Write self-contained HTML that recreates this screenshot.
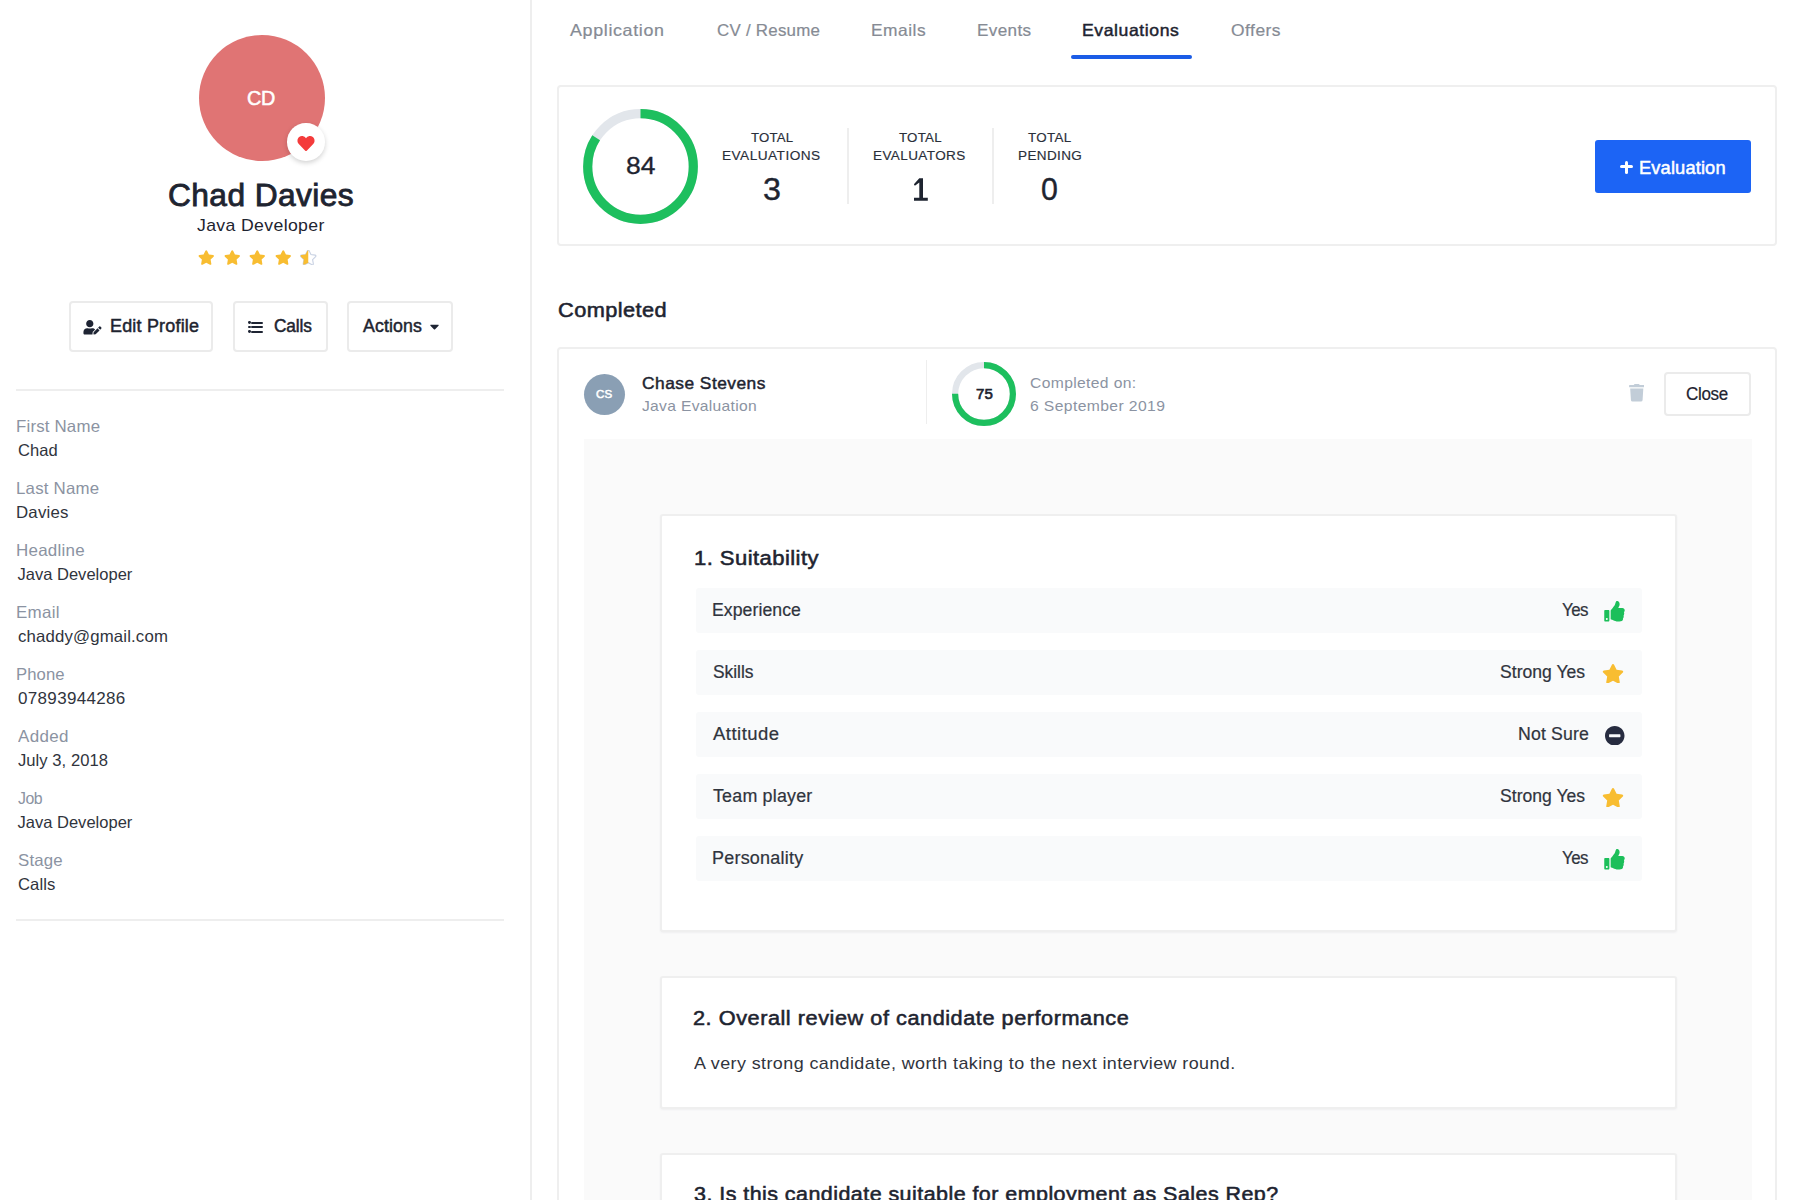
<!DOCTYPE html>
<html><head><meta charset="utf-8"><style>
html,body{margin:0;padding:0;background:#fff;width:1800px;height:1200px;overflow:hidden;position:relative}
.b{position:absolute}
.t{position:absolute;white-space:pre;font-family:"Liberation Sans",sans-serif}
</style></head><body>
<div class="b" style="left:530px;top:0px;width:2px;height:1200px;background:#eeeeee"></div>
<div class="b" style="left:198.5px;top:35px;width:126px;height:126px;border-radius:50%;background:#e07474"></div>
<div class="b" style="left:287px;top:123px;width:37.5px;height:37.5px;border-radius:50%;background:#fff;box-shadow:0 2px 5px rgba(0,0,0,.18)"></div>
<svg class="b" style="left:296.5px;top:134.5px" width="18" height="16" viewBox="0 0 512 480"><path fill="#f43b3b" d="M462.3 62.6C407.5 15.9 326 24.3 275.7 76.2L256 96.5l-19.7-20.3C186.1 24.3 104.5 15.9 49.7 62.6c-62.8 53.6-66.1 149.8-9.9 207.9l193.5 199.8c12.5 12.9 32.8 12.9 45.3 0l193.5-199.8c56.3-58.1 53-154.3-9.8-207.9z"/></svg>
<svg class="b" style="left:198px;top:250px" width="16.5" height="15" viewBox="0 0 576 512"><path fill="#f8bd31" d="M259.3 17.8L194 150.2 47.9 171.5c-26.2 3.8-36.7 36.1-17.7 54.6l105.7 103-25 145.5c-4.5 26.3 23.2 46 46.4 33.7L288 439.6l130.7 68.7c23.2 12.2 50.9-7.4 46.4-33.7l-25-145.5 105.7-103c19-18.5 8.5-50.8-17.7-54.6L382 150.2 316.7 17.8c-11.7-23.6-45.6-23.9-57.4 0z"/></svg>
<svg class="b" style="left:223.5px;top:250px" width="16.5" height="15" viewBox="0 0 576 512"><path fill="#f8bd31" d="M259.3 17.8L194 150.2 47.9 171.5c-26.2 3.8-36.7 36.1-17.7 54.6l105.7 103-25 145.5c-4.5 26.3 23.2 46 46.4 33.7L288 439.6l130.7 68.7c23.2 12.2 50.9-7.4 46.4-33.7l-25-145.5 105.7-103c19-18.5 8.5-50.8-17.7-54.6L382 150.2 316.7 17.8c-11.7-23.6-45.6-23.9-57.4 0z"/></svg>
<svg class="b" style="left:249px;top:250px" width="16.5" height="15" viewBox="0 0 576 512"><path fill="#f8bd31" d="M259.3 17.8L194 150.2 47.9 171.5c-26.2 3.8-36.7 36.1-17.7 54.6l105.7 103-25 145.5c-4.5 26.3 23.2 46 46.4 33.7L288 439.6l130.7 68.7c23.2 12.2 50.9-7.4 46.4-33.7l-25-145.5 105.7-103c19-18.5 8.5-50.8-17.7-54.6L382 150.2 316.7 17.8c-11.7-23.6-45.6-23.9-57.4 0z"/></svg>
<svg class="b" style="left:274.5px;top:250px" width="16.5" height="15" viewBox="0 0 576 512"><path fill="#f8bd31" d="M259.3 17.8L194 150.2 47.9 171.5c-26.2 3.8-36.7 36.1-17.7 54.6l105.7 103-25 145.5c-4.5 26.3 23.2 46 46.4 33.7L288 439.6l130.7 68.7c23.2 12.2 50.9-7.4 46.4-33.7l-25-145.5 105.7-103c19-18.5 8.5-50.8-17.7-54.6L382 150.2 316.7 17.8c-11.7-23.6-45.6-23.9-57.4 0z"/></svg>
<svg class="b" style="left:300px;top:250px" width="16.5" height="15" viewBox="0 0 576 512"><defs><clipPath id="hc"><rect x="0" y="0" width="288" height="512"/></clipPath></defs><path fill="none" stroke="#c9d2e3" stroke-width="40" d="M259.3 17.8L194 150.2 47.9 171.5c-26.2 3.8-36.7 36.1-17.7 54.6l105.7 103-25 145.5c-4.5 26.3 23.2 46 46.4 33.7L288 439.6l130.7 68.7c23.2 12.2 50.9-7.4 46.4-33.7l-25-145.5 105.7-103c19-18.5 8.5-50.8-17.7-54.6L382 150.2 316.7 17.8c-11.7-23.6-45.6-23.9-57.4 0z"/><path fill="#f8bd31" clip-path="url(#hc)" d="M259.3 17.8L194 150.2 47.9 171.5c-26.2 3.8-36.7 36.1-17.7 54.6l105.7 103-25 145.5c-4.5 26.3 23.2 46 46.4 33.7L288 439.6l130.7 68.7c23.2 12.2 50.9-7.4 46.4-33.7l-25-145.5 105.7-103c19-18.5 8.5-50.8-17.7-54.6L382 150.2 316.7 17.8c-11.7-23.6-45.6-23.9-57.4 0z"/></svg>
<div class="b" style="left:69px;top:301px;width:144px;height:50.5px;border:2px solid #ebebeb;border-radius:4px;box-sizing:border-box;background:#fff"></div>
<div class="b" style="left:233px;top:301px;width:94.5px;height:50.5px;border:2px solid #ebebeb;border-radius:4px;box-sizing:border-box;background:#fff"></div>
<div class="b" style="left:347px;top:301px;width:105.5px;height:50.5px;border:2px solid #ebebeb;border-radius:4px;box-sizing:border-box;background:#fff"></div>
<svg class="b" style="left:83px;top:320px" width="19" height="14.5" viewBox="0 0 640 512"><path fill="#1e2433" d="M224 256c70.7 0 128-57.3 128-128S294.7 0 224 0 96 57.3 96 128s57.3 128 128 128zm89.6 32h-16.7c-22.2 10.2-46.9 16-72.9 16s-50.6-5.8-72.9-16h-16.7C60.2 288 0 348.2 0 422.4V464c0 26.5 21.5 48 48 48h274.9c-2.4-6.8-3.4-14-2.6-21.3l6.8-60.9 1.2-11.1 7.9-7.9 77.3-77.3c-24.5-27.7-60-45.5-99.9-45.5zm45.3 145.3l-6.8 61c-1.1 10.2 7.5 18.8 17.6 17.6l60.9-6.8 137.9-137.9-71.7-71.7-137.9 137.8zM633 268.9L595.1 231c-9.3-9.3-24.5-9.3-33.8 0l-37.8 37.8-4.1 4.1 71.8 71.7 41.8-41.8c9.3-9.4 9.3-24.5 0-33.9z"/></svg>
<div class="b" style="left:248px;top:321.1px;width:2.8px;height:2.8px;background:#1e2433;border-radius:50%"></div>
<div class="b" style="left:250.5px;top:321.5px;width:12.5px;height:2px;background:#1e2433;border-radius:1px"></div>
<div class="b" style="left:248px;top:325.6px;width:2.8px;height:2.8px;background:#1e2433;border-radius:50%"></div>
<div class="b" style="left:250.5px;top:326.0px;width:12.5px;height:2px;background:#1e2433;border-radius:1px"></div>
<div class="b" style="left:248px;top:330.1px;width:2.8px;height:2.8px;background:#1e2433;border-radius:50%"></div>
<div class="b" style="left:250.5px;top:330.5px;width:12.5px;height:2px;background:#1e2433;border-radius:1px"></div>
<svg class="b" style="left:430px;top:323px" width="9" height="8" viewBox="0 160 320 220"><path fill="#1e2433" d="M31.3 192h257.3c17.8 0 26.7 21.5 14.1 34.1L174.1 354.8c-7.8 7.8-20.5 7.8-28.3 0L17.2 226.1C4.6 213.5 13.5 192 31.3 192z"/></svg>
<div class="b" style="left:16px;top:389px;width:488px;height:2px;background:#eeeeee"></div>
<div class="b" style="left:16px;top:919px;width:488px;height:2px;background:#eeeeee"></div>
<div class="b" style="left:1071px;top:55px;width:121px;height:4px;background:#1b5ce6;border-radius:2px"></div>
<div class="b" style="left:557px;top:85px;width:1220px;height:161px;border:2px solid #efefef;border-radius:4px;box-sizing:border-box"></div>
<svg class="b" style="left:583px;top:109px" width="115" height="115" viewBox="0 0 115 115"><circle cx="57.5" cy="57.5" r="52.8" fill="none" stroke="#e2e6eb" stroke-width="9.2"/><circle cx="57.5" cy="57.5" r="52.8" fill="none" stroke="#1dbf5e" stroke-width="9.2" stroke-dasharray="278.67 1000" transform="rotate(-90 57.5 57.5)"/></svg>
<div class="b" style="left:847px;top:128px;width:1.5px;height:76px;background:#eeeeee"></div>
<div class="b" style="left:992px;top:128px;width:1.5px;height:76px;background:#eeeeee"></div>
<div class="b" style="left:1595px;top:140px;width:156px;height:53px;background:#1c64f5;border-radius:3px"></div>
<div class="b" style="left:1620px;top:165.3px;width:12.5px;height:3.2px;background:#fff;border-radius:1.5px"></div>
<div class="b" style="left:1624.6px;top:161px;width:3.2px;height:12.5px;background:#fff;border-radius:1.5px"></div>
<svg class="b" style="left:910px;top:175px" width="22" height="30" viewBox="0 0 22 30"><path fill="#1e2430" d="M9.3 3.3 L13 3.3 L13 22.7 L17.8 22.7 L17.8 25.7 L4 25.7 L4 22.7 L9.3 22.7 L9.3 7.6 L5.6 10.3 Q4.3 11 4 9.6 Q3.9 8.8 4.8 8.2 Z"/></svg>
<div class="b" style="left:557px;top:347px;width:1220px;height:900px;border:2px solid #efefef;border-radius:4px;box-sizing:border-box"></div>
<div class="b" style="left:584px;top:373.5px;width:41px;height:41px;border-radius:50%;background:#8a9fb4"></div>
<div class="b" style="left:925.5px;top:360px;width:1.5px;height:64px;background:#eeeeee"></div>
<svg class="b" style="left:952px;top:361.5px" width="64" height="64" viewBox="0 0 64 64"><circle cx="32" cy="32" r="28.9" fill="none" stroke="#e2e6eb" stroke-width="6.2"/><circle cx="32" cy="32" r="28.9" fill="none" stroke="#1dbf5e" stroke-width="6.2" stroke-dasharray="136.19 1000" transform="rotate(-90 32 32)"/></svg>
<svg class="b" style="left:1628.5px;top:384px" width="15.5" height="17.5" viewBox="0 0 448 512"><path fill="#c2cdd8" d="M432 32H312l-9.4-18.7A24 24 0 0 0 281.1 0H166.8a23.72 23.72 0 0 0-21.4 13.3L136 32H16A16 16 0 0 0 0 48v32a16 16 0 0 0 16 16h416a16 16 0 0 0 16-16V48a16 16 0 0 0-16-16zM53.2 467a48 48 0 0 0 47.9 45h245.8a48 48 0 0 0 47.9-45L416 128H32z"/></svg>
<div class="b" style="left:1664px;top:372px;width:87px;height:44px;border:2px solid #ebebeb;border-radius:4px;box-sizing:border-box;background:#fff"></div>
<div class="b" style="left:584px;top:438.5px;width:1168px;height:800px;background:#fafafa"></div>
<div class="b" style="left:660px;top:513.5px;width:1017px;height:418px;background:#fff;border:2px solid #efefef;border-radius:3px;box-sizing:border-box;box-shadow:0 1px 2px rgba(40,40,80,.05)"></div>
<div class="b" style="left:660px;top:975.5px;width:1017px;height:133px;background:#fff;border:2px solid #efefef;border-radius:3px;box-sizing:border-box;box-shadow:0 1px 2px rgba(40,40,80,.05)"></div>
<div class="b" style="left:660px;top:1152.5px;width:1017px;height:200px;background:#fff;border:2px solid #efefef;border-radius:3px;box-sizing:border-box;box-shadow:0 1px 2px rgba(40,40,80,.05)"></div>
<div class="b" style="left:695.5px;top:587.5px;width:946px;height:45.5px;background:#f9fafb;border-radius:3px"></div>
<div class="b" style="left:695.5px;top:649.5px;width:946px;height:45.5px;background:#f9fafb;border-radius:3px"></div>
<div class="b" style="left:695.5px;top:711.5px;width:946px;height:45.5px;background:#f9fafb;border-radius:3px"></div>
<div class="b" style="left:695.5px;top:773.5px;width:946px;height:45.5px;background:#f9fafb;border-radius:3px"></div>
<div class="b" style="left:695.5px;top:835.5px;width:946px;height:45.5px;background:#f9fafb;border-radius:3px"></div>
<svg class="b" style="left:1604px;top:601px" width="21" height="20.5" viewBox="0 0 512 512"><path fill="#1cbf5a" d="M104 224H24c-13.255 0-24 10.745-24 24v240c0 13.255 10.745 24 24 24h80c13.255 0 24-10.745 24-24V248c0-13.255-10.745-24-24-24zM64 472c-13.255 0-24-10.745-24-24s10.745-24 24-24 24 10.745 24 24-10.745 24-24 24zM384 81.452c0 42.416-25.97 66.208-33.277 94.548h101.723c33.397 0 59.397 27.746 59.553 58.098.084 17.938-7.546 37.249-19.439 49.197l-.11.11c9.836 23.337 8.237 56.037-9.308 79.469 8.681 25.895-.069 57.704-16.382 74.757 4.298 17.598 2.244 32.575-6.148 44.632C440.202 511.587 389.616 512 346.839 512l-2.845-.001c-48.287-.017-87.806-17.598-119.560-31.725-15.957-7.099-36.821-15.887-52.651-16.178-6.540-.120-11.783-5.457-11.783-11.998v-213.770c0-3.200 1.282-6.271 3.558-8.521 39.614-39.144 56.648-80.587 89.117-113.111 14.804-14.832 20.188-37.236 25.393-58.902C282.515 39.293 291.817 0 312 0c24 0 72 8 72 81.452z"/></svg>
<svg class="b" style="left:1602px;top:663.5px" width="22" height="19.5" viewBox="0 0 576 512"><path fill="#f8bd31" d="M259.3 17.8L194 150.2 47.9 171.5c-26.2 3.8-36.7 36.1-17.7 54.6l105.7 103-25 145.5c-4.5 26.3 23.2 46 46.4 33.7L288 439.6l130.7 68.7c23.2 12.2 50.9-7.4 46.4-33.7l-25-145.5 105.7-103c19-18.5 8.5-50.8-17.7-54.6L382 150.2 316.7 17.8c-11.7-23.6-45.6-23.9-57.4 0z"/></svg>
<svg class="b" style="left:1605px;top:725.8px" width="19.5" height="19.5" viewBox="8 8 496 496"><path fill="#272c40" d="M256 8C119 8 8 119 8 256s111 248 248 248 248-111 248-248S393 8 256 8zM124 296c-6.6 0-12-5.4-12-12v-56c0-6.6 5.4-12 12-12h264c6.6 0 12 5.4 12 12v56c0 6.6-5.4 12-12 12H124z"/></svg>
<svg class="b" style="left:1602px;top:787.5px" width="22" height="19.5" viewBox="0 0 576 512"><path fill="#f8bd31" d="M259.3 17.8L194 150.2 47.9 171.5c-26.2 3.8-36.7 36.1-17.7 54.6l105.7 103-25 145.5c-4.5 26.3 23.2 46 46.4 33.7L288 439.6l130.7 68.7c23.2 12.2 50.9-7.4 46.4-33.7l-25-145.5 105.7-103c19-18.5 8.5-50.8-17.7-54.6L382 150.2 316.7 17.8c-11.7-23.6-45.6-23.9-57.4 0z"/></svg>
<svg class="b" style="left:1604px;top:849px" width="21" height="20.5" viewBox="0 0 512 512"><path fill="#1cbf5a" d="M104 224H24c-13.255 0-24 10.745-24 24v240c0 13.255 10.745 24 24 24h80c13.255 0 24-10.745 24-24V248c0-13.255-10.745-24-24-24zM64 472c-13.255 0-24-10.745-24-24s10.745-24 24-24 24 10.745 24 24-10.745 24-24 24zM384 81.452c0 42.416-25.97 66.208-33.277 94.548h101.723c33.397 0 59.397 27.746 59.553 58.098.084 17.938-7.546 37.249-19.439 49.197l-.11.11c9.836 23.337 8.237 56.037-9.308 79.469 8.681 25.895-.069 57.704-16.382 74.757 4.298 17.598 2.244 32.575-6.148 44.632C440.202 511.587 389.616 512 346.839 512l-2.845-.001c-48.287-.017-87.806-17.598-119.560-31.725-15.957-7.099-36.821-15.887-52.651-16.178-6.540-.120-11.783-5.457-11.783-11.998v-213.770c0-3.200 1.282-6.271 3.558-8.521 39.614-39.144 56.648-80.587 89.117-113.111 14.804-14.832 20.188-37.236 25.393-58.902C282.515 39.293 291.817 0 312 0c24 0 72 8 72 81.452z"/></svg>
<div class="t" style="left:246.78px;top:88.00px;font-size:20px;line-height:20px;color:#ffffff;letter-spacing:-0.244px;-webkit-text-stroke:0.54px #ffffff;transform:scaleX(0.9914);transform-origin:0 0">CD</div>
<div class="t" style="left:168.41px;top:180.15px;font-size:31px;line-height:31px;color:#1e2430;letter-spacing:0.400px;-webkit-text-stroke:0.84px #1e2430;transform:scaleX(1.0231);transform-origin:0 0">Chad Davies</div>
<div class="t" style="left:196.70px;top:217.45px;font-size:17px;line-height:17px;color:#1e2430;letter-spacing:0.342px;transform:scaleX(1.0390);transform-origin:0 0">Java Developer</div>
<div class="t" style="left:109.82px;top:317.93px;font-size:17.5px;line-height:17.5px;color:#1e2430;letter-spacing:0.192px;-webkit-text-stroke:0.47px #1e2430;transform:scaleX(1.0260);transform-origin:0 0">Edit Profile</div>
<div class="t" style="left:273.93px;top:317.93px;font-size:17.5px;line-height:17.5px;color:#1e2430;letter-spacing:-0.129px;-webkit-text-stroke:0.47px #1e2430;transform:scaleX(0.9871);transform-origin:0 0">Calls</div>
<div class="t" style="left:362.54px;top:317.93px;font-size:17.5px;line-height:17.5px;color:#1e2430;letter-spacing:0.131px;-webkit-text-stroke:0.47px #1e2430;transform:scaleX(1.0137);transform-origin:0 0">Actions</div>
<div class="t" style="left:16.48px;top:417.68px;font-size:16.5px;line-height:16.5px;color:#8b93a2;letter-spacing:0.180px;transform:scaleX(1.0208);transform-origin:0 0">First Name</div>
<div class="t" style="left:17.50px;top:441.58px;font-size:16.5px;line-height:16.5px;color:#30343d;letter-spacing:0.038px;transform:scaleX(1.0029);transform-origin:0 0">Chad</div>
<div class="t" style="left:16.48px;top:479.68px;font-size:16.5px;line-height:16.5px;color:#8b93a2;letter-spacing:0.202px;transform:scaleX(1.0209);transform-origin:0 0">Last Name</div>
<div class="t" style="left:16.48px;top:503.58px;font-size:16.5px;line-height:16.5px;color:#30343d;letter-spacing:0.188px;transform:scaleX(1.0195);transform-origin:0 0">Davies</div>
<div class="t" style="left:16.47px;top:541.68px;font-size:16.5px;line-height:16.5px;color:#8b93a2;letter-spacing:0.246px;transform:scaleX(1.0277);transform-origin:0 0">Headline</div>
<div class="t" style="left:17.50px;top:565.58px;font-size:16.5px;line-height:16.5px;color:#30343d;letter-spacing:0.013px">Java Developer</div>
<div class="t" style="left:16.47px;top:603.68px;font-size:16.5px;line-height:16.5px;color:#8b93a2;letter-spacing:0.268px;transform:scaleX(1.0279);transform-origin:0 0">Email</div>
<div class="t" style="left:17.50px;top:627.58px;font-size:16.5px;line-height:16.5px;color:#30343d;letter-spacing:0.154px;transform:scaleX(1.0163);transform-origin:0 0">chaddy@gmail.com</div>
<div class="t" style="left:16.49px;top:665.68px;font-size:16.5px;line-height:16.5px;color:#8b93a2;letter-spacing:0.107px;transform:scaleX(1.0093);transform-origin:0 0">Phone</div>
<div class="t" style="left:17.50px;top:689.58px;font-size:16.5px;line-height:16.5px;color:#30343d;letter-spacing:0.307px;transform:scaleX(1.0314);transform-origin:0 0">07893944286</div>
<div class="t" style="left:17.50px;top:727.68px;font-size:16.5px;line-height:16.5px;color:#8b93a2;letter-spacing:0.324px;transform:scaleX(1.0280);transform-origin:0 0">Added</div>
<div class="t" style="left:17.50px;top:751.58px;font-size:16.5px;line-height:16.5px;color:#30343d;letter-spacing:0.045px;transform:scaleX(1.0056);transform-origin:0 0">July 3, 2018</div>
<div class="t" style="left:17.50px;top:789.68px;font-size:16.5px;line-height:16.5px;color:#8b93a2;letter-spacing:-0.500px;transform:scaleX(0.9635);transform-origin:0 0">Job</div>
<div class="t" style="left:17.50px;top:813.58px;font-size:16.5px;line-height:16.5px;color:#30343d;letter-spacing:0.013px">Java Developer</div>
<div class="t" style="left:17.50px;top:851.68px;font-size:16.5px;line-height:16.5px;color:#8b93a2;letter-spacing:0.191px;transform:scaleX(1.0181);transform-origin:0 0">Stage</div>
<div class="t" style="left:17.50px;top:875.58px;font-size:16.5px;line-height:16.5px;color:#30343d;letter-spacing:0.084px;transform:scaleX(1.0093);transform-origin:0 0">Calls</div>
<div class="t" style="left:570.11px;top:21.77px;font-size:16.5px;line-height:16.5px;color:#868b94;letter-spacing:0.613px;-webkit-text-stroke:0.20px #868b94;transform:scaleX(1.0821);transform-origin:0 0">Application</div>
<div class="t" style="left:717.10px;top:21.77px;font-size:16.5px;line-height:16.5px;color:#868b94;letter-spacing:0.237px;-webkit-text-stroke:0.20px #868b94;transform:scaleX(1.0248);transform-origin:0 0">CV / Resume</div>
<div class="t" style="left:871.05px;top:21.77px;font-size:16.5px;line-height:16.5px;color:#868b94;letter-spacing:0.479px;-webkit-text-stroke:0.20px #868b94;transform:scaleX(1.0520);transform-origin:0 0">Emails</div>
<div class="t" style="left:977.07px;top:21.77px;font-size:16.5px;line-height:16.5px;color:#868b94;letter-spacing:0.348px;-webkit-text-stroke:0.20px #868b94;transform:scaleX(1.0365);transform-origin:0 0">Events</div>
<div class="t" style="left:1082.17px;top:21.77px;font-size:16.5px;line-height:16.5px;color:#1e2430;letter-spacing:0.538px;-webkit-text-stroke:0.45px #1e2430;transform:scaleX(1.0681);transform-origin:0 0">Evaluations</div>
<div class="t" style="left:1231.10px;top:21.77px;font-size:16.5px;line-height:16.5px;color:#868b94;letter-spacing:0.467px;-webkit-text-stroke:0.20px #868b94;transform:scaleX(1.0553);transform-origin:0 0">Offers</div>
<div class="t" style="left:625.76px;top:154.40px;font-size:24px;line-height:24px;color:#1e2430;letter-spacing:0.000px;-webkit-text-stroke:0.29px #1e2430;transform:scaleX(1.1039);transform-origin:0 0">84</div>
<div class="t" style="left:751.08px;top:131.25px;font-size:13px;line-height:13px;color:#2a2f3a;letter-spacing:0.170px;-webkit-text-stroke:0.16px #2a2f3a;transform:scaleX(1.0170);transform-origin:0 0">TOTAL</div>
<div class="t" style="left:722.43px;top:148.95px;font-size:13px;line-height:13px;color:#2a2f3a;letter-spacing:0.429px;-webkit-text-stroke:0.16px #2a2f3a;transform:scaleX(1.0509);transform-origin:0 0">EVALUATIONS</div>
<div class="t" style="left:898.58px;top:131.25px;font-size:13px;line-height:13px;color:#2a2f3a;letter-spacing:0.230px;-webkit-text-stroke:0.16px #2a2f3a;transform:scaleX(1.0231);transform-origin:0 0">TOTAL</div>
<div class="t" style="left:873.04px;top:148.95px;font-size:13px;line-height:13px;color:#2a2f3a;letter-spacing:0.372px;-webkit-text-stroke:0.16px #2a2f3a;transform:scaleX(1.0411);transform-origin:0 0">EVALUATORS</div>
<div class="t" style="left:1028.08px;top:131.25px;font-size:13px;line-height:13px;color:#2a2f3a;letter-spacing:0.289px;-webkit-text-stroke:0.16px #2a2f3a;transform:scaleX(1.0293);transform-origin:0 0">TOTAL</div>
<div class="t" style="left:1017.84px;top:148.95px;font-size:13px;line-height:13px;color:#2a2f3a;letter-spacing:0.363px;-webkit-text-stroke:0.16px #2a2f3a;transform:scaleX(1.0388);transform-origin:0 0">PENDING</div>
<div class="t" style="left:763.15px;top:174.25px;font-size:31px;line-height:31px;color:#1e2430;letter-spacing:0.000px;-webkit-text-stroke:0.37px #1e2430;transform:scaleX(1.0409);transform-origin:0 0">3</div>
<div class="t" style="left:1041.20px;top:174.25px;font-size:31px;line-height:31px;color:#1e2430;letter-spacing:0.000px;-webkit-text-stroke:0.37px #1e2430;transform:scaleX(0.9773);transform-origin:0 0">0</div>
<div class="t" style="left:1638.63px;top:158.60px;font-size:18px;line-height:18px;color:#ffffff;letter-spacing:0.135px;-webkit-text-stroke:0.49px #ffffff;transform:scaleX(1.0149);transform-origin:0 0">Evaluation</div>
<div class="t" style="left:557.56px;top:299.15px;font-size:21px;line-height:21px;color:#1e2430;letter-spacing:0.426px;-webkit-text-stroke:0.57px #1e2430;transform:scaleX(1.0351);transform-origin:0 0">Completed</div>
<div class="t" style="left:596.26px;top:388.83px;font-size:11.5px;line-height:11.5px;color:#ffffff;letter-spacing:0.088px;-webkit-text-stroke:0.52px #ffffff;transform:scaleX(1.0053);transform-origin:0 0">CS</div>
<div class="t" style="left:642.23px;top:375.18px;font-size:16.5px;line-height:16.5px;color:#1e2430;letter-spacing:0.456px;-webkit-text-stroke:0.45px #1e2430;transform:scaleX(1.0513);transform-origin:0 0">Chase Stevens</div>
<div class="t" style="left:641.50px;top:398.05px;font-size:15px;line-height:15px;color:#8b93a2;letter-spacing:0.300px;transform:scaleX(1.0414);transform-origin:0 0">Java Evaluation</div>
<div class="t" style="left:975.64px;top:385.75px;font-size:15px;line-height:15px;color:#1e2430;letter-spacing:0.041px;-webkit-text-stroke:0.67px #1e2430;transform:scaleX(1.0024);transform-origin:0 0">75</div>
<div class="t" style="left:1029.80px;top:375.45px;font-size:15px;line-height:15px;color:#8b93a2;letter-spacing:0.340px;transform:scaleX(1.0441);transform-origin:0 0">Completed on:</div>
<div class="t" style="left:1029.80px;top:398.25px;font-size:15px;line-height:15px;color:#8b93a2;letter-spacing:0.364px;transform:scaleX(1.0464);transform-origin:0 0">6 September 2019</div>
<div class="t" style="left:1686.10px;top:385.82px;font-size:17.5px;line-height:17.5px;color:#1e2430;letter-spacing:-0.324px;-webkit-text-stroke:0.21px #1e2430;transform:scaleX(0.9715);transform-origin:0 0">Close</div>
<div class="t" style="left:693.95px;top:546.85px;font-size:21px;line-height:21px;color:#1e2430;letter-spacing:0.414px;-webkit-text-stroke:0.57px #1e2430;transform:scaleX(1.0499);transform-origin:0 0">1. Suitability</div>
<div class="t" style="left:711.80px;top:601.62px;font-size:17.5px;line-height:17.5px;color:#30343d;letter-spacing:0.070px;-webkit-text-stroke:0.21px #30343d;transform:scaleX(1.0074);transform-origin:0 0">Experience</div>
<div class="t" style="left:1561.80px;top:601.62px;font-size:17.5px;line-height:17.5px;color:#30343d;letter-spacing:-0.520px;-webkit-text-stroke:0.21px #30343d;transform:scaleX(0.9654);transform-origin:0 0">Yes</div>
<div class="t" style="left:712.80px;top:663.62px;font-size:17.5px;line-height:17.5px;color:#30343d;letter-spacing:-0.040px;-webkit-text-stroke:0.21px #30343d;transform:scaleX(0.9952);transform-origin:0 0">Skills</div>
<div class="t" style="left:1500.21px;top:663.62px;font-size:17.5px;line-height:17.5px;color:#30343d;letter-spacing:0.026px;-webkit-text-stroke:0.21px #30343d;transform:scaleX(1.0027);transform-origin:0 0">Strong Yes</div>
<div class="t" style="left:712.81px;top:725.62px;font-size:17.5px;line-height:17.5px;color:#30343d;letter-spacing:0.458px;-webkit-text-stroke:0.21px #30343d;transform:scaleX(1.0576);transform-origin:0 0">Attitude</div>
<div class="t" style="left:1518.29px;top:725.62px;font-size:17.5px;line-height:17.5px;color:#30343d;letter-spacing:0.124px;-webkit-text-stroke:0.21px #30343d;transform:scaleX(1.0130);transform-origin:0 0">Not Sure</div>
<div class="t" style="left:712.81px;top:787.62px;font-size:17.5px;line-height:17.5px;color:#30343d;letter-spacing:0.191px;-webkit-text-stroke:0.21px #30343d;transform:scaleX(1.0204);transform-origin:0 0">Team player</div>
<div class="t" style="left:1500.21px;top:787.62px;font-size:17.5px;line-height:17.5px;color:#30343d;letter-spacing:0.026px;-webkit-text-stroke:0.21px #30343d;transform:scaleX(1.0027);transform-origin:0 0">Strong Yes</div>
<div class="t" style="left:711.78px;top:849.62px;font-size:17.5px;line-height:17.5px;color:#30343d;letter-spacing:0.223px;-webkit-text-stroke:0.21px #30343d;transform:scaleX(1.0266);transform-origin:0 0">Personality</div>
<div class="t" style="left:1561.80px;top:849.62px;font-size:17.5px;line-height:17.5px;color:#30343d;letter-spacing:-0.520px;-webkit-text-stroke:0.21px #30343d;transform:scaleX(0.9654);transform-origin:0 0">Yes</div>
<div class="t" style="left:692.74px;top:1008.28px;font-size:20.5px;line-height:20.5px;color:#1e2430;letter-spacing:0.517px;-webkit-text-stroke:0.55px #1e2430;transform:scaleX(1.0575);transform-origin:0 0">2. Overall review of candidate performance</div>
<div class="t" style="left:693.50px;top:1054.55px;font-size:17px;line-height:17px;color:#30343d;letter-spacing:0.391px;transform:scaleX(1.0550);transform-origin:0 0">A very strong candidate, worth taking to the next interview round.</div>
<div class="t" style="left:693.79px;top:1183.88px;font-size:20.5px;line-height:20.5px;color:#1e2430;letter-spacing:0.426px;-webkit-text-stroke:0.55px #1e2430;transform:scaleX(1.0477);transform-origin:0 0">3. Is this candidate suitable for employment as Sales Rep?</div>
</body></html>
